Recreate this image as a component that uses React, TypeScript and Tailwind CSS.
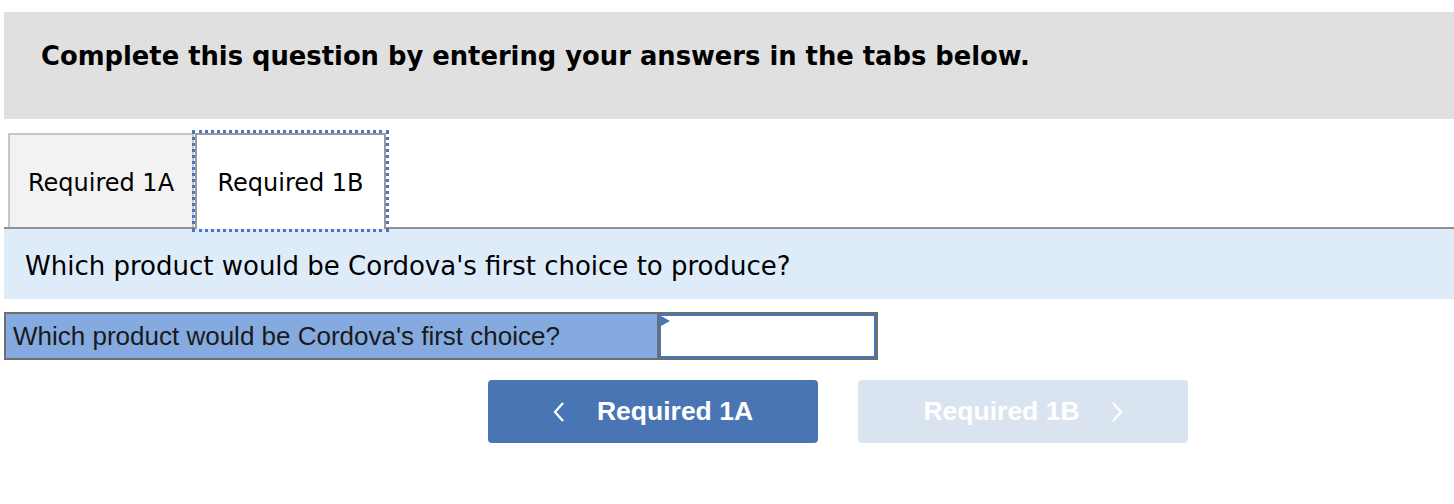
import React from "react";

const verdana = "font-['Verdana','DejaVu_Sans',sans-serif]";
const arial = "font-['Arial','Liberation_Sans',sans-serif]";

function Chevron({ dir }: { dir: "left" | "right" }) {
  return (
    <svg width="12" height="20" viewBox="0 0 12 20" fill="none" stroke="currentColor" strokeWidth="2.2">
      {dir === "left" ? <path d="M10 1 L2 10 L10 19" /> : <path d="M2 1 L10 10 L2 19" />}
    </svg>
  );
}

export default function App() {
  return (
    <div className="w-[1454px] h-[504px] bg-white pt-[12px] pl-[4px]">
      <div className={`h-[107px] bg-[#e0e0e0] pl-[37px] pt-[28px] ${verdana}`}>
        <h2 className="text-[25.8px] font-bold text-black leading-[32px]">
          Complete this question by entering your answers in the tabs below.
        </h2>
      </div>

      <div className="mt-[14px] flex items-end pl-[4px] border-b-2 border-[#909090] h-[96px]">
        <button
          className={`h-[94px] w-[186px] pt-[4px] bg-[#f2f2f2] border-2 border-b-0 border-[#c6c6c6] text-[24px] text-black ${verdana}`}
        >
          Required 1A
        </button>
        <button
          className={`ml-[1px] mb-[-2px] h-[96px] w-[191px] pt-[2px] bg-white border-2 border-b-0 border-[#9a9a9a] outline-[3px] outline-dotted outline-[#4a76c0] text-[24px] text-black ${verdana}`}
        >
          Required 1B
        </button>
      </div>

      <div className={`h-[70px] bg-[#deebf8] flex items-center pl-[21px] pt-[4px] ${verdana}`}>
        <p className="text-[26px] text-black">Which product would be Cordova's first choice to produce?</p>
      </div>

      <div className="mt-[13px] flex w-[874px] h-[48px] border-2 border-[#6e6e6e]">
        <div className={`w-[651px] bg-[#84aae0] flex items-center pl-[7px] text-[26px] text-[#1a1a1a] ${arial}`}>
          Which product would be Cordova's first choice?
        </div>
        <div className="relative flex-1 border-l-2 border-[#6e6e6e]">
          <div className="absolute inset-0 border-2 border-[#4a76b5] bg-white" />
          <div className="absolute left-[2px] top-[2px] w-0 h-0 border-t-[5px] border-b-[5px] border-l-[9px] border-t-transparent border-b-transparent border-l-[#4a76b5]" />
        </div>
      </div>

      <div className={`mt-[20px] ml-[484px] flex gap-[40px] ${arial}`}>
        <button className="w-[330px] h-[63px] rounded-[4px] bg-[#4a75b4] text-white flex items-center justify-center gap-[32px] text-[26.5px] font-bold">
          <Chevron dir="left" />
          <span>Required 1A</span>
        </button>
        <button className="w-[330px] h-[63px] rounded-[4px] bg-[#dae4f0] text-white flex items-center justify-center gap-[31px] text-[26.5px] font-bold">
          <span>Required 1B</span>
          <Chevron dir="right" />
        </button>
      </div>
    </div>
  );
}
